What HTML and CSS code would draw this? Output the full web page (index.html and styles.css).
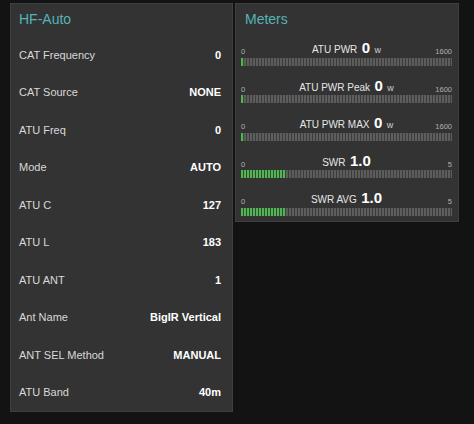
FILE: index.html
```html
<!DOCTYPE html>
<html>
<head>
<meta charset="utf-8">
<link rel="stylesheet" href="styles.css">
</head>
<body>
<div class="page">
  <section class="card card-left">
    <div class="title">HF-Auto</div>
    <div class="row"><span class="lab">CAT Frequency</span><span class="val">0</span></div>
    <div class="row"><span class="lab">CAT Source</span><span class="val">NONE</span></div>
    <div class="row"><span class="lab">ATU Freq</span><span class="val">0</span></div>
    <div class="row"><span class="lab">Mode</span><span class="val">AUTO</span></div>
    <div class="row"><span class="lab">ATU C</span><span class="val">127</span></div>
    <div class="row"><span class="lab">ATU L</span><span class="val">183</span></div>
    <div class="row"><span class="lab">ATU ANT</span><span class="val">1</span></div>
    <div class="row"><span class="lab">Ant Name</span><span class="val">BigIR Vertical</span></div>
    <div class="row"><span class="lab">ANT SEL Method</span><span class="val">MANUAL</span></div>
    <div class="row"><span class="lab">ATU Band</span><span class="val">40m</span></div>
  </section>
  <section class="card card-right">
    <div class="title mtitle">Meters</div>
    <div class="meter">
      <div class="head"><span class="min">0</span><span class="mlabel"><span class="t">ATU PWR</span> <span class="v">0</span> <span class="u">w</span></span><span class="max">1600</span></div>
      <div class="bar"><div class="fill" style="width:3px"></div><div class="rest"></div></div>
    </div>
    <div class="meter">
      <div class="head"><span class="min">0</span><span class="mlabel"><span class="t">ATU PWR Peak</span> <span class="v">0</span> <span class="u">w</span></span><span class="max">1600</span></div>
      <div class="bar"><div class="fill" style="width:3px"></div><div class="rest"></div></div>
    </div>
    <div class="meter">
      <div class="head"><span class="min">0</span><span class="mlabel"><span class="t">ATU PWR MAX</span> <span class="v">0</span> <span class="u">w</span></span><span class="max">1600</span></div>
      <div class="bar"><div class="fill" style="width:3px"></div><div class="rest"></div></div>
    </div>
    <div class="meter">
      <div class="head"><span class="min">0</span><span class="mlabel"><span class="t">SWR</span> <span class="v">1.0</span></span><span class="max">5</span></div>
      <div class="bar"><div class="fill" style="width:45px"></div><div class="rest"></div></div>
    </div>
    <div class="meter">
      <div class="head"><span class="min">0</span><span class="mlabel"><span class="t">SWR AVG</span> <span class="v">1.0</span></span><span class="max">5</span></div>
      <div class="bar"><div class="fill" style="width:45px"></div><div class="rest"></div></div>
    </div>
  </section>
</div>
</body>
</html>
```

FILE: styles.css
```css
html, body {
  margin: 0;
  padding: 0;
  background: #131313;
}
body {
  font-family: "Liberation Sans", Arial, sans-serif;
  color: #e0e0e0;
  width: 474px;
  height: 424px;
  overflow: hidden;
}
.page {
  display: flex;
  align-items: flex-start;
  gap: 2px;
  padding: 3px 0 0 10px;
}
.card {
  background: #333333;
  border: 1px solid #3f3f3f;
  box-sizing: border-box;
}
.card-left {
  width: 223px;
  padding: 0 11px 0 8px;
}
.card-right {
  width: 224px;
  padding: 0 6px 5px 5px;
}
.title {
  color: #54b4b6;
  font-size: 14px;
  line-height: 16px;
  padding: 7px 0 9px 0;
}
.mtitle {
  padding: 7px 0 1px 4px;
}
.row {
  height: 37.5px;
  display: flex;
  align-items: center;
  justify-content: space-between;
  font-size: 11px;
}
.lab {
  color: #d9d9d9;
}
.val {
  color: #ffffff;
  font-weight: bold;
}
.meter {
  padding-top: 11px;
}
.head {
  display: grid;
  grid-template-columns: 1fr auto 1fr;
  align-items: end;
  height: 16px;
  margin-bottom: 2.6px;
}
.min, .max {
  font-size: 7.5px;
  line-height: 7px;
  color: #b0b0b0;
}
.min { justify-self: start; }
.max { justify-self: end; }
.mlabel {
  line-height: 15px;
  white-space: nowrap;
  color: #e6e6e6;
  padding-bottom: 0;
}
.mlabel .t {
  font-size: 10px;
  line-height: 10px;
}
.mlabel .v {
  font-size: 15px;
  line-height: 15px;
  font-weight: bold;
  color: #ffffff;
}
.mlabel .u {
  font-size: 9px;
  line-height: 10px;
  color: #d0d0d0;
}
.bar {
  display: flex;
  height: 8px;
}
.fill {
  background: repeating-linear-gradient(90deg, #55b255 0 2px, #2e4f2e 2px 3px);
}
.rest {
  flex: 1;
  background: repeating-linear-gradient(90deg, #5d5d5d 0 2px, #3c3c3c 2px 3px);
}
```
